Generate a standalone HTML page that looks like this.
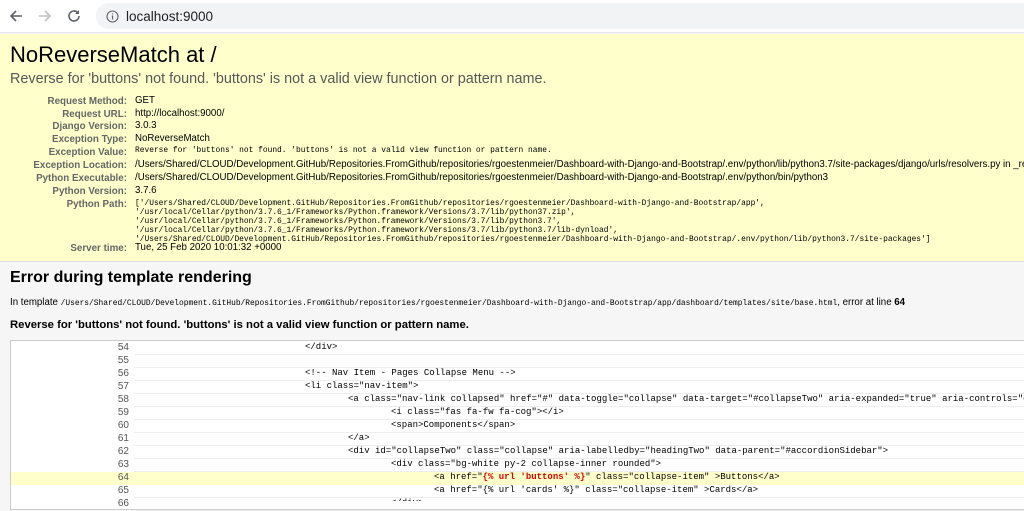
<!DOCTYPE html>
<html><head><meta charset="utf-8"><style>
*{margin:0;padding:0;box-sizing:border-box}
body{width:1024px;height:501px;overflow:hidden;background:#f6f6f6;font-family:"Liberation Sans",sans-serif;color:#000;position:relative}
.bar{position:absolute;left:0;top:0;width:1024px;height:33px;background:#fff;border-bottom:1px solid #e3e6ec}
.addr{position:absolute;left:96px;top:3px;width:940px;height:26px;background:#f1f3f4;border-radius:13px}
.addr span{position:absolute;left:30px;top:6px;font-size:13.5px;color:#202124}
.ab{position:absolute;color:#5f6368}
#summary{position:absolute;left:0;top:34px;width:1024px;height:228px;background:#ffffcc;border-bottom:1px solid #ddd;overflow:hidden}
h1{position:absolute;left:10px;top:8px;font-size:22px;font-weight:normal;white-space:nowrap}
.sub{position:absolute;left:10px;top:37px;font-size:14.4px;color:#575757;white-space:nowrap}
.lab{position:absolute;width:127px;text-align:right;color:#666;font-weight:bold;font-size:9.8px;white-space:nowrap}
.val{position:absolute;left:135px;font-size:9.7px;white-space:nowrap}
.mono{font-family:"Liberation Mono",monospace;font-size:7.9px;line-height:8.9px}
.sec{position:absolute;left:10px;white-space:nowrap}
.code{position:absolute;left:10px;top:340px;width:1030px;height:170px;background:#fff;border:1px solid #ccc}
.ln{position:absolute;left:0;width:1030px;height:13px;font-size:10px}
.ln .n{position:absolute;left:0;width:118px;text-align:right;color:#555;top:0}
.ln .c{position:absolute;left:123px;right:0;top:0;height:13px;border-bottom:1px solid #eee}
.ln.hl{background:#ffffcc}
.ln.hl .c{border-bottom-color:#ffffcc}
.red{color:#d00;font-weight:bold}
</style></head><body>
<div class="bar">
<svg class="ab" style="left:8px;top:8px" width="16" height="16" viewBox="0 0 16 16"><path d="M14 8H3M8 3L3 8l5 5" stroke="#5f6368" stroke-width="1.6" fill="none"/></svg>
<svg class="ab" style="left:37px;top:8px" width="16" height="16" viewBox="0 0 16 16"><path d="M2 8h11M8 3l5 5-5 5" stroke="#bdc1c6" stroke-width="1.6" fill="none"/></svg>
<svg class="ab" style="left:66px;top:8px" width="16" height="16" viewBox="0 0 16 16"><path d="M13 8a5 5 0 1 1-1.5-3.6" stroke="#5f6368" stroke-width="1.6" fill="none"/><path d="M13 2v4H9z" fill="#5f6368"/></svg>
<div class="addr"><svg style="position:absolute;left:10px;top:7px" width="13" height="13" viewBox="0 0 13 13"><circle cx="6.5" cy="6.5" r="5.5" stroke="#5f6368" fill="none" stroke-width="1.1"/><path d="M6.5 5.5v4M6.5 3.4v1" stroke="#5f6368" stroke-width="1.2"/></svg><span>localhost:9000</span></div>
</div>
<div id="summary">
<h1>NoReverseMatch at /</h1>
<div class="sub">Reverse for 'buttons' not found. 'buttons' is not a valid view function or pattern name.</div>
<div class="lab" style="top:62px">Request Method:</div><div class="val" style="top:61px">GET</div>
<div class="lab" style="top:75px">Request URL:</div><div class="val" style="top:74px">http://localhost:9000/</div>
<div class="lab" style="top:87px">Django Version:</div><div class="val" style="top:86px">3.0.3</div>
<div class="lab" style="top:100px">Exception Type:</div><div class="val" style="top:99px">NoReverseMatch</div>
<div class="lab" style="top:113px">Exception Value:</div><div class="val mono" style="top:113px">Reverse for 'buttons' not found. 'buttons' is not a valid view function or pattern name.</div>
<div class="lab" style="top:126px">Exception Location:</div><div class="val" style="top:125px">/Users/Shared/CLOUD/Development.GitHub/Repositories.FromGithub/repositories/rgoestenmeier/Dashboard-with-Django-and-Bootstrap/.env/python/lib/python3.7/site-packages/django/urls/resolvers.py in _reverse_with_prefix, line 677</div>
<div class="lab" style="top:139px">Python Executable:</div><div class="val" style="top:138px">/Users/Shared/CLOUD/Development.GitHub/Repositories.FromGithub/repositories/rgoestenmeier/Dashboard-with-Django-and-Bootstrap/.env/python/bin/python3</div>
<div class="lab" style="top:152px">Python Version:</div><div class="val" style="top:151px">3.7.6</div>
<div class="lab" style="top:165px">Python Path:</div><div class="val mono" style="top:166px">['/Users/Shared/CLOUD/Development.GitHub/Repositories.FromGithub/repositories/rgoestenmeier/Dashboard-with-Django-and-Bootstrap/app',<br> '/usr/local/Cellar/python/3.7.6_1/Frameworks/Python.framework/Versions/3.7/lib/python37.zip',<br> '/usr/local/Cellar/python/3.7.6_1/Frameworks/Python.framework/Versions/3.7/lib/python3.7',<br> '/usr/local/Cellar/python/3.7.6_1/Frameworks/Python.framework/Versions/3.7/lib/python3.7/lib-dynload',<br> '/Users/Shared/CLOUD/Development.GitHub/Repositories.FromGithub/repositories/rgoestenmeier/Dashboard-with-Django-and-Bootstrap/.env/python/lib/python3.7/site-packages']</div>
<div class="lab" style="top:209px">Server time:</div><div class="val" style="top:208px">Tue, 25 Feb 2020 10:01:32 +0000</div>
</div>
<div class="sec" style="top:269px;font-size:16px;font-weight:bold">Error during template rendering</div>
<div class="sec" style="top:297px;font-size:9.7px">In template <span class="mono">/Users/Shared/CLOUD/Development.GitHub/Repositories.FromGithub/repositories/rgoestenmeier/Dashboard-with-Django-and-Bootstrap/app/dashboard/templates/site/base.html</span>, error at line <b>64</b></div>
<div class="sec" style="top:319px;font-size:11.3px;font-weight:bold">Reverse for 'buttons' not found. 'buttons' is not a valid view function or pattern name.</div>
<div class="code">
<div class="ln" style="top:1px"><span class="n">54</span><span class="c"></span></div>
<div class="ln" style="top:14px"><span class="n">55</span><span class="c"></span></div>
<div class="ln" style="top:27px"><span class="n">56</span><span class="c"></span></div>
<div class="ln" style="top:40px"><span class="n">57</span><span class="c"></span></div>
<div class="ln" style="top:53px"><span class="n">58</span><span class="c"></span></div>
<div class="ln" style="top:66px"><span class="n">59</span><span class="c"></span></div>
<div class="ln" style="top:79px"><span class="n">60</span><span class="c"></span></div>
<div class="ln" style="top:92px"><span class="n">61</span><span class="c"></span></div>
<div class="ln" style="top:105px"><span class="n">62</span><span class="c"></span></div>
<div class="ln" style="top:118px"><span class="n">63</span><span class="c"></span></div>
<div class="ln hl" style="top:131px"><span class="n">64</span><span class="c"></span></div>
<div class="ln" style="top:144px"><span class="n">65</span><span class="c"></span></div>
<div class="ln" style="top:157px"><span class="n">66</span><span class="c"></span></div>
</div>
<div style="position:absolute;left:0;top:340px;width:1024px;height:161px;overflow:hidden;font-family:'Liberation Mono',monospace;font-size:9px;white-space:pre">
<div style="position:absolute;left:305px;top:2px">&lt;/div&gt;</div>
<div style="position:absolute;left:305px;top:28px">&lt;!-- Nav Item - Pages Collapse Menu --&gt;</div>
<div style="position:absolute;left:305px;top:41px">&lt;li class="nav-item"&gt;</div>
<div style="position:absolute;left:348px;top:54px">&lt;a class="nav-link collapsed" href="#" data-toggle="collapse" data-target="#collapseTwo" aria-expanded="true" aria-controls="collapseTwo"&gt;</div>
<div style="position:absolute;left:391px;top:67px">&lt;i class="fas fa-fw fa-cog"&gt;&lt;/i&gt;</div>
<div style="position:absolute;left:391px;top:80px">&lt;span&gt;Components&lt;/span&gt;</div>
<div style="position:absolute;left:348px;top:93px">&lt;/a&gt;</div>
<div style="position:absolute;left:348px;top:106px">&lt;div id="collapseTwo" class="collapse" aria-labelledby="headingTwo" data-parent="#accordionSidebar"&gt;</div>
<div style="position:absolute;left:391px;top:119px">&lt;div class="bg-white py-2 collapse-inner rounded"&gt;</div>
<div style="position:absolute;left:434px;top:132px">&lt;a href="<span class="red">{% url 'buttons' %}</span>" class="collapse-item" &gt;Buttons&lt;/a&gt;</div>
<div style="position:absolute;left:434px;top:145px">&lt;a href="{% url 'cards' %}" class="collapse-item" &gt;Cards&lt;/a&gt;</div>
<div style="position:absolute;left:391px;top:158px">&lt;/div&gt;</div>
</div>
</body></html>
